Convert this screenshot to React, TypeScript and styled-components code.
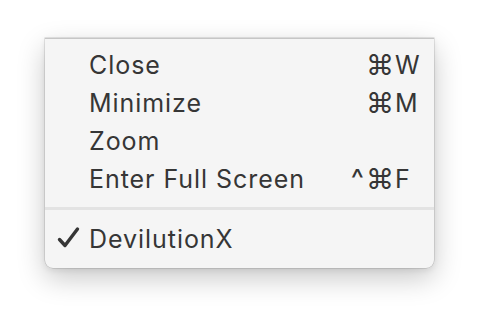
import React from "react";
import styled, { createGlobalStyle } from "styled-components";

const GlobalStyle = createGlobalStyle`
    html, body {
        margin : 0;
        padding : 0;
        background : #ffffff;
    }
    body {
        font-family : Inter, "Liberation Sans", "DejaVu Sans", sans-serif;
    }
`;

interface Item {
    label: string;
    mods?: string;
    keyName?: string;
    checked?: boolean;
}

const windowItems: Item[] = [
    { label: "Close", mods: "⌘", keyName: "W" },
    { label: "Minimize", mods: "⌘", keyName: "M" },
    { label: "Zoom" },
    { label: "Enter Full Screen", mods: "^⌘", keyName: "F" },
];

const appItems: Item[] = [{ label: "DevilutionX", checked: true }];

const CheckIcon = () => (
    <svg width="24" height="24" viewBox="0 0 24 24">
        <path
            d="M2.5 13.5 L8 19.5 L20.5 3"
            fill="none"
            stroke="#363636"
            strokeWidth="3.4"
            strokeLinecap="round"
            strokeLinejoin="round"
        />
    </svg>
);

const MenuRow: React.FC<{ item: Item }> = ({ item }) => (
    <Row>
        <CheckCell>{item.checked && <CheckIcon />}</CheckCell>
        <Label>{item.label}</Label>
        <Mods>{item.mods}</Mods>
        <KeyName>{item.keyName}</KeyName>
    </Row>
);

const App: React.FC = () => {
    return (
        <Page>
            <GlobalStyle />
            <Menu>
                {windowItems.map((item) => (
                    <MenuRow key={item.label} item={item} />
                ))}
                <Separator />
                {appItems.map((item) => (
                    <MenuRow key={item.label} item={item} />
                ))}
            </Menu>
        </Page>
    );
};

const Page = styled.div`
    width : 480px;
    height : 322px;
    padding : 38px 0 0 45px;
    box-sizing : border-box;
    background : #ffffff;
`;

const Menu = styled.div`
    width : 389px;
    height : 230px;
    box-sizing : border-box;
    padding : 7px 0 9px 0;
    background : #f5f5f5;
    border-top : 1px solid #c6c6c6;
    border-radius : 0 0 8px 8px;
    box-shadow : 0 0 0 0.5px rgba(0, 0, 0, 0.18), 0 10px 28px rgba(0, 0, 0, 0.22), 0 2px 6px rgba(0, 0, 0, 0.08);
`;

const Row = styled.div`
    display : grid;
    grid-template-columns : 44px 1fr auto 40px;
    align-items : center;
    height : 38px;
    font-size : 25px;
    color : #363636;
    line-height : 1;
`;

const CheckCell = styled.div`
    display : flex;
    justify-content : flex-end;
    padding-right : 8px;
    margin-top : -2px;
`;

const Label = styled.span`
    white-space : nowrap;
    letter-spacing : 0.95px;
`;

const Mods = styled.span`
    text-align : right;
    font-size : 28px;
    letter-spacing : 2px;
    margin-right : -2px;
`;

const KeyName = styled.span`
    padding-left : 1px;
    text-align : left;
    letter-spacing : 0.5px;
`;

const Separator = styled.div`
    height : 3px;
    margin : 9px 0 10px 0;
    background : #e3e3e3;
`;

export default App;
